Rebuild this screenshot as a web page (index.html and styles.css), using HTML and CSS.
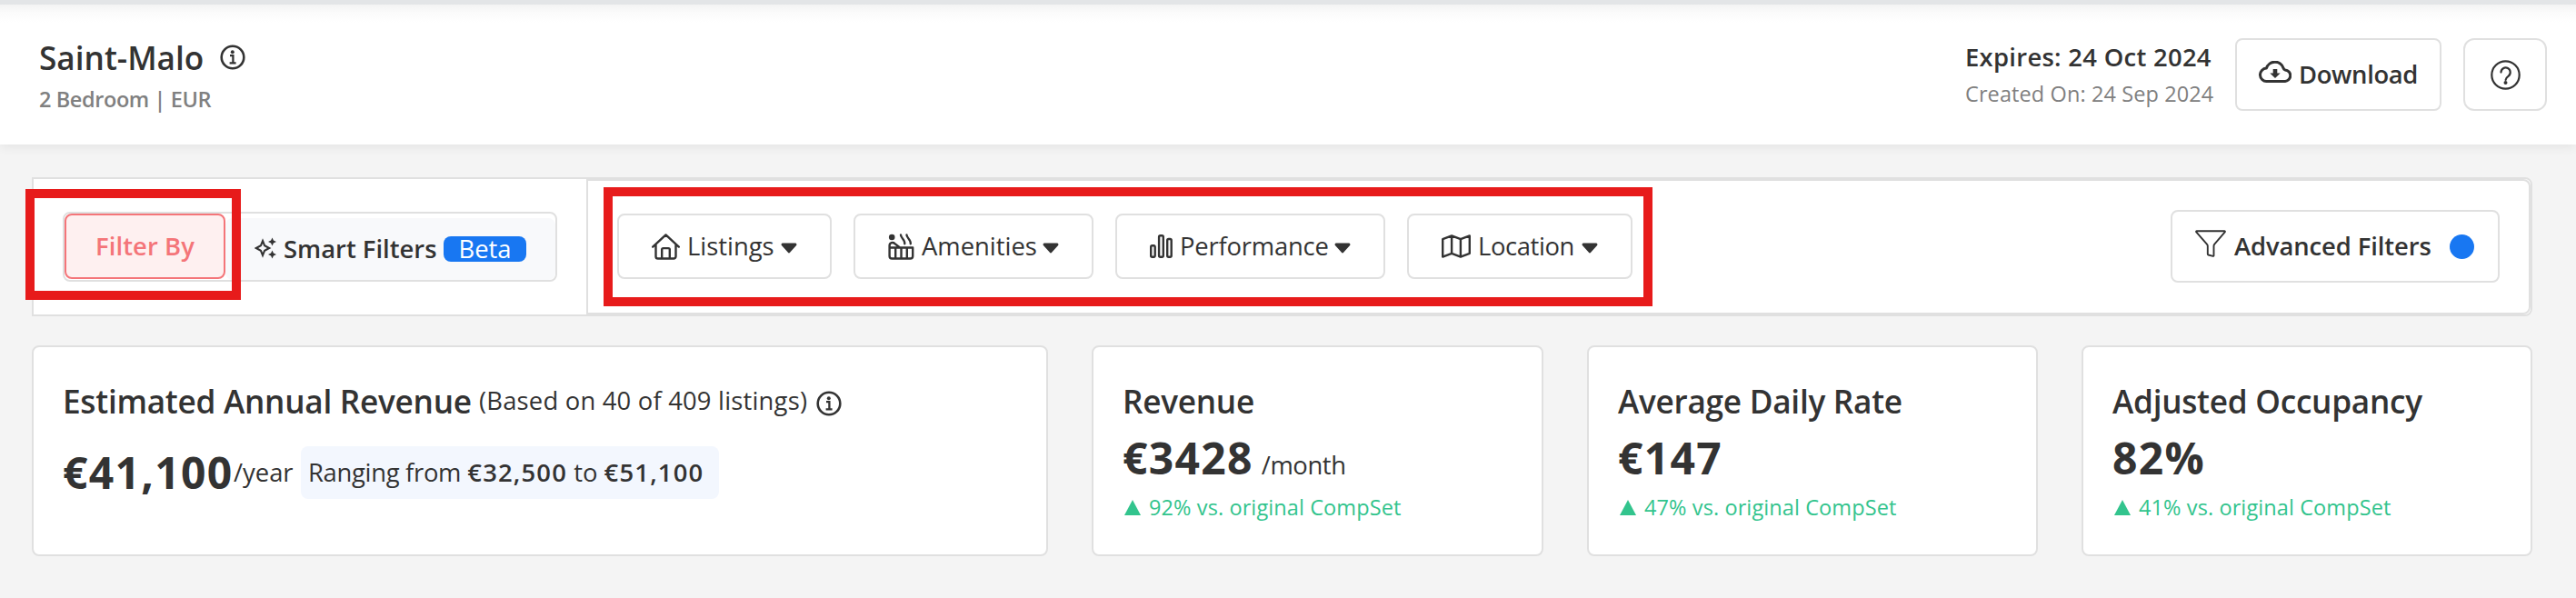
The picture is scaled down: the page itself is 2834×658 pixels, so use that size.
FILE: index.html
```html
<!DOCTYPE html>
<html lang="en">
<head>
  <meta charset="utf-8">
  <title>Saint-Malo</title>
  <link rel="stylesheet" href="styles.css">
</head>
<body>

<header class="header">
  <div class="market">
    <div class="market-name">
      <h1>Saint-Malo</h1>
      <svg class="info-icon" width="28" height="28" viewBox="0 0 28 28">
        <circle cx="14" cy="14" r="12.3" fill="none" stroke="#333" stroke-width="2.6"/>
        <circle cx="13.8" cy="8.3" r="2" fill="#333"/>
        <path d="M11 12.2h3.4v8M10.6 20.4h7" fill="none" stroke="#333" stroke-width="2.3"/>
      </svg>
    </div>
    <div class="market-sub">2 Bedroom | EUR</div>
  </div>
  <div class="header-right">
    <div class="dates">
      <div class="expires">Expires: 24 Oct 2024</div>
      <div class="created">Created On: 24 Sep 2024</div>
    </div>
    <button class="btn download">
      <svg class="cloud-icon" width="36" height="24" viewBox="0 0 36 24">
        <path d="M9 22.5h19a6.3 6.3 0 0 0 .9-12.6 3.4 3.4 0 0 1-1.8-2A9.8 9.8 0 0 0 8.4 8.1a7.2 7.2 0 0 0 .6 14.4z" fill="none" stroke="#333" stroke-width="3" stroke-linejoin="round"/>
        <path d="M15.7 9h4.600v4.500h3.400L18 19l-5.700-5.500h3.400z" fill="#333"/>
      </svg>
      <span>Download</span>
    </button>
    <button class="btn help">
      <svg width="33" height="33" viewBox="0 0 33 33" fill="none" stroke="#333" stroke-width="2.2">
        <circle cx="16.5" cy="16.5" r="15.2"/>
        <path d="M11.5 13.6a5.1 5.1 0 1 1 8 4.2c-1.900 1.300-2.900 2-2.900 4.100" stroke-linecap="round"/>
        <circle cx="16.5" cy="25" r="2" fill="#333" stroke="none"/>
      </svg>
    </button>
  </div>
</header>

<main class="content">
  <section class="filter-bar">
    <div class="filter-mode">
      <div class="mode-group">
        <button class="mode active">Filter By</button>
        <button class="mode smart">
          <svg width="24" height="24" viewBox="0 0 24 24" fill="#333">
            <path d="M9 4l2.100 5.300L16.200 12l-5.100 2.700L9 20l-2.100-5.300L1.800 12l5.100-2.700z" fill="none" stroke="#333" stroke-width="2.1"/>
            <path d="M19.500.5l1.400 3.100L24 5l-3.100 1.400-1.400 3.100-1.400-3.100L15 5l3.100-1.400zM19.500 14.500l1.400 3.100L24 19l-3.100 1.400-1.400 3.100-1.400-3.100L15 19l3.100-1.400z"/>
          </svg>
          <span class="smart-label">Smart Filters</span>
          <span class="beta">Beta</span>
        </button>
      </div>
    </div>
    <div class="filter-list">
      <button class="btn drop listings">
        <svg width="31" height="29" viewBox="0 0 31 29" fill="none" stroke="#333" stroke-width="2.4" stroke-linecap="round" stroke-linejoin="round">
          <path d="M1.200 14.600L15.500 1.400l14.300 13.200M4.500 12v13.200a2.300 2.300 0 0 0 2.300 2.300h17.400a2.300 2.300 0 0 0 2.300-2.300V12M11.200 27.200v-9.600a1.500 1.500 0 0 1 1.500-1.500h5.600a1.500 1.500 0 0 1 1.500 1.500v9.600"/>
        </svg>
        <span>Listings</span>
        <svg class="caret" width="18" height="12" viewBox="0 0 18 12"><path d="M2 .5h14a1.500 1.500 0 0 1 1.100 2.500l-7 7.800a1.500 1.500 0 0 1-2.200 0l-7-7.800A1.500 1.500 0 0 1 2 .5z" fill="#333"/></svg>
      </button>
      <button class="btn drop amenities">
        <svg width="29" height="29" viewBox="0 0 29 29" fill="none" stroke="#333" stroke-width="2.4" stroke-linecap="round" stroke-linejoin="round">
          <circle cx="4.200" cy="4" r="3.300" fill="#333" stroke="none"/>
          <path d="M1.600 15.500h25.600v9.300a2.700 2.700 0 0 1-2.700 2.700H4.300a2.700 2.700 0 0 1-2.700-2.700zM1.600 15.500v-2.300c0-3 3.600-4.200 5.900-2.100l5.200 4.200M8.200 15.500v12M14.500 15.500v12M20.800 15.500v12"/>
          <path d="M14 1.400c-.3 3 4.800 5.500 4.300 9.800M20.500 1.400c-.3 3 4.800 5.500 4.300 9.800"/>
        </svg>
        <span>Amenities</span>
        <svg class="caret" width="18" height="12" viewBox="0 0 18 12"><path d="M2 .5h14a1.500 1.500 0 0 1 1.100 2.500l-7 7.800a1.500 1.500 0 0 1-2.200 0l-7-7.800A1.500 1.500 0 0 1 2 .5z" fill="#333"/></svg>
      </button>
      <button class="btn drop performance">
        <svg width="25" height="26" viewBox="0 0 25 26" fill="none" stroke="#333" stroke-width="2.4">
          <rect x="1.200" y="12.300" width="4.500" height="12.400" rx="1.500"/>
          <rect x="10.100" y="1.300" width="4.700" height="23.400" rx="1.500"/>
          <rect x="19.200" y="5" width="4.500" height="19.700" rx="1.500"/>
        </svg>
        <span>Performance</span>
        <svg class="caret" width="18" height="12" viewBox="0 0 18 12"><path d="M2 .5h14a1.500 1.500 0 0 1 1.100 2.500l-7 7.800a1.500 1.500 0 0 1-2.200 0l-7-7.800A1.500 1.500 0 0 1 2 .5z" fill="#333"/></svg>
      </button>
      <button class="btn drop location">
        <svg width="32" height="26" viewBox="0 0 32 26" fill="none" stroke="#333" stroke-width="2.4" stroke-linejoin="round">
          <path d="M1.200 5.200l9.900-3.800 9.800 3.800 9.900-3.800v19.400l-9.900 3.800-9.800-3.800-9.900 3.800zM11.100 1.400v19.400M20.900 5.200v19.400"/>
        </svg>
        <span>Location</span>
        <svg class="caret" width="18" height="12" viewBox="0 0 18 12"><path d="M2 .5h14a1.500 1.500 0 0 1 1.100 2.500l-7 7.800a1.500 1.500 0 0 1-2.200 0l-7-7.800A1.500 1.500 0 0 1 2 .5z" fill="#333"/></svg>
      </button>
      <button class="btn advanced">
        <svg class="funnel-icon" width="34" height="30" viewBox="0 0 34 30" fill="none" stroke="#333" stroke-width="1.900" stroke-linejoin="round">
          <path d="M1.800 1.200h30.400a.7.7 0 0 1 .5 1.200L21.300 15.600q-.8 1-.8 2.200v10.300a.7.7 0 0 1-.9.700l-5-1.300a1.200 1.200 0 0 1-.8-1.100v-8.600q0-1.200-.9-2.200L1.300 2.400a.7.7 0 0 1 .5-1.200z"/>
        </svg>
        <span>Advanced Filters</span>
        <i class="dot"></i>
      </button>
    </div>
    <div class="mark mark-mode"></div>
    <div class="mark mark-list"></div>
  </section>

  <section class="cards">
    <div class="card">
      <div class="card-head">
        <h2 class="annual">Estimated Annual Revenue</h2>
        <span class="based">(Based on 40 of 409 listings)</span>
        <svg class="info-icon" width="28" height="28" viewBox="0 0 28 28">
          <circle cx="14" cy="14" r="12.3" fill="none" stroke="#333" stroke-width="2.6"/>
          <circle cx="13.8" cy="8.3" r="2" fill="#333"/>
          <path d="M11 12.2h3.4v8M10.6 20.4h7" fill="none" stroke="#333" stroke-width="2.3"/>
        </svg>
      </div>
      <div class="annual-row">
        <span class="value annual-value">€41,100</span>
        <span class="year">/year</span>
        <div class="range"><span class="range-from">Ranging from</span> <b>€32,500</b> to <b>€51,100</b></div>
      </div>
    </div>
    <div class="card">
      <h2>Revenue</h2>
      <div class="value-row"><span class="value">€3428</span><span class="month">/month</span></div>
      <div class="trend"><svg width="18" height="17" viewBox="0 0 18 17"><path d="M9 0l9 17H0z" fill="#32c48d"/></svg>92% vs. original CompSet</div>
    </div>
    <div class="card">
      <h2>Average Daily Rate</h2>
      <div class="value-row"><span class="value">€147</span></div>
      <div class="trend"><svg width="18" height="17" viewBox="0 0 18 17"><path d="M9 0l9 17H0z" fill="#32c48d"/></svg>47% vs. original CompSet</div>
    </div>
    <div class="card">
      <h2>Adjusted Occupancy</h2>
      <div class="value-row"><span class="value">82%</span></div>
      <div class="trend"><svg width="18" height="17" viewBox="0 0 18 17"><path d="M9 0l9 17H0z" fill="#32c48d"/></svg>41% vs. original CompSet</div>
    </div>
  </section>
</main>

</body>
</html>
```
FILE: styles.css
```css
* {
  box-sizing: border-box;
}
body {
  margin: 0;
  font-family: "Open Sans", "Noto Sans", sans-serif;
  font-size: 27.4px;
  line-height: 36px;
  color: #333;
  background-color: #f4f4f4;
}
h1,
h2 {
  margin: 0;
  font-size: 35.2px;
  line-height: 44px;
  font-weight: 600;
}
h2 {
  letter-spacing: -0.27px;
}
svg {
  display: block;
  flex: none;
}
button {
  font: inherit;
  color: inherit;
  padding: 0;
  white-space: nowrap;
}
.btn {
  display: flex;
  align-items: center;
  border: 2px solid #e0e0e0;
  border-radius: 8px;
  background-color: #fff;
}

/* header */
.header {
  display: flex;
  justify-content: space-between;
  height: 159px;
  padding: 36px 32px 0 43px;
  border-top: 5px solid #e3e5e7;
  background: linear-gradient(#f3f3f3, #fbfbfb 9px, #fff 20px);
  box-shadow: 0 2px 12px rgba(0, 0, 0, 0.08);
}
.market-name {
  display: flex;
  align-items: center;
}
.market-name .info-icon {
  margin-left: 18px;
}
.market-sub {
  margin-top: 8px;
  font-size: 23.5px;
  line-height: 32px;
  font-weight: 600;
  letter-spacing: -0.4px;
  color: #808080;
}
.header-right {
  display: flex;
  align-items: flex-start;
}
.dates {
  width: 297px;
  padding-top: 4px;
}
.expires {
  font-weight: 600;
  letter-spacing: 0.3px;
}
.created {
  margin-top: 6px;
  font-size: 23.5px;
  line-height: 32px;
  letter-spacing: 0.1px;
  color: #808080;
}
.download {
  width: 227px;
  height: 80px;
  margin: 1px 24px 0 0;
  padding-left: 24px;
  font-weight: 600;
  letter-spacing: -0.35px;
}
.cloud-icon {
  margin: 0 8px 6px 0;
}
.help {
  width: 92px;
  height: 80px;
  margin-top: 1px;
  justify-content: center;
  border-radius: 12px;
}

/* filters */
.content {
  padding: 36px 48px 0 35px;
}
.filter-bar {
  position: relative;
  display: flex;
  height: 153px;
  border: 2px solid #e0e0e0;
  border-radius: 0 8px 8px 0;
  background-color: #fff;
}
.filter-mode {
  display: flex;
  align-items: center;
  width: 608px;
  padding-left: 32px;
}
.mode-group {
  display: flex;
  width: 544px;
  height: 77px;
  border: 2px solid #e0e0e0;
  border-radius: 8px;
}
.mode {
  border: none;
  border-radius: 8px;
}
.active {
  width: 177px;
  height: 72px;
  border: 2px solid #f47579;
  background-color: #fef0f0;
  font-weight: 600;
  letter-spacing: 0.1px;
  color: #f47579;
}
.smart {
  display: flex;
  flex: 1;
  align-items: center;
  margin-top: 5px;
  padding-left: 32px;
  background-color: #f8f9fb;
  font-weight: 600;
}
.smart svg {
  margin-bottom: 3px;
}
.smart-label {
  margin-left: 8px;
}
.beta {
  width: 91px;
  height: 28px;
  margin-left: auto;
  margin-right: 32px;
  border-radius: 8px;
  line-height: 28px;
  font-weight: 400;
  color: #fff;
  background-color: #1877f2;
}
.filter-list {
  display: flex;
  flex: 1;
  align-items: center;
  padding: 0 32px;
  border: 2px solid #e0e0e0;
  border-radius: 0 8px 8px 0;
}
.drop {
  height: 72px;
  margin: 0 24px 1px 0;
  padding-left: 36px;
}
.drop span {
  margin-left: 8px;
}
.drop .caret {
  margin: 3px 36px 0 auto;
}
.listings {
  width: 236px;
}
.amenities {
  width: 264px;
}
.performance {
  width: 297px;
  letter-spacing: -0.2px;
}
.location {
  width: 248px;
  letter-spacing: -0.4px;
}
.advanced {
  width: 362px;
  height: 80px;
  margin: 0 0 1px auto;
  padding-left: 25px;
  font-weight: 600;
  letter-spacing: -0.1px;
}
.funnel-icon {
  margin: 0 9px 7px 0;
}
.dot {
  width: 27px;
  height: 27px;
  margin: 0 26px 0 auto;
  border-radius: 50%;
  background-color: #1877f2;
}

/* highlight boxes over the filters */
.mark {
  position: absolute;
  border: 10px solid #e71b1b;
}
.mark-mode {
  left: -9px;
  top: 11px;
  width: 237px;
  height: 122px;
}
.mark-list {
  left: 627px;
  top: 9px;
  width: 1154px;
  height: 131px;
}

/* cards */
.cards {
  display: grid;
  grid-template-columns: 1118px 497px 1fr 1fr;
  gap: 48px;
  margin-top: 32px;
}
.card {
  height: 232px;
  padding: 37px 32px 0;
  border: 2px solid #e0e0e0;
  border-radius: 8px;
  background-color: #fff;
  white-space: nowrap;
}
.card-head {
  display: flex;
  align-items: center;
}
.annual {
  width: 458px;
}
.based {
  letter-spacing: 0.2px;
}
.card-head .info-icon {
  margin: 6px 0 0 10px;
}
.annual-row {
  display: flex;
  align-items: center;
  margin-top: 28px;
}
.value {
  font-size: 48px;
  line-height: 58px;
  font-weight: 700;
  letter-spacing: 1.3px;
}
.annual-value {
  width: 188px;
}
.year {
  width: 74px;
}
.range {
  width: 460px;
  height: 58px;
  padding-left: 8px;
  border-radius: 8px;
  line-height: 57px;
  background-color: #f3f7fe;
}
.range-from {
  letter-spacing: -0.3px;
}
.range b {
  font-weight: 600;
  letter-spacing: 1.2px;
}
.value-row {
  display: flex;
  align-items: baseline;
  margin-top: 12px;
}
.month {
  margin-left: 9px;
  letter-spacing: -0.4px;
}
.trend {
  display: flex;
  align-items: center;
  margin-top: 9px;
  font-size: 23.5px;
  line-height: 32px;
  letter-spacing: 0.1px;
  color: #32c48d;
}
.trend svg {
  margin: 1px 9px 0 2px;
}
```
